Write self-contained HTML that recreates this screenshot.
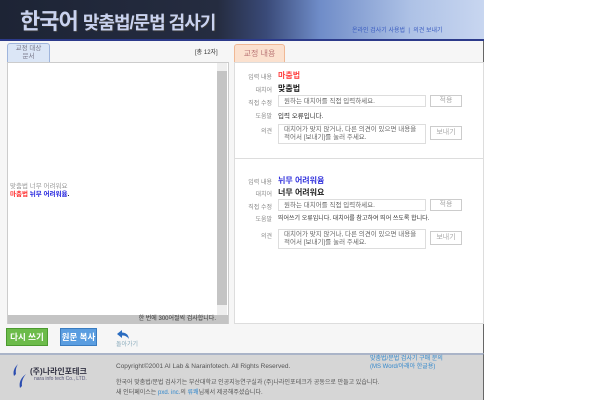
<!DOCTYPE html><html><head><meta charset="utf-8"><style>
*{margin:0;padding:0;box-sizing:border-box}
body{width:600px;height:400px;background:#fff;font-family:"Liberation Sans","Noto Sans CJK KR",sans-serif;position:relative;overflow:hidden}
.a{position:absolute}
.hd{left:0;top:0;width:484px;height:41px;background:linear-gradient(90deg,#1d2435 0%,#252c40 45%,#3a4a78 55%,#6f8cc8 66%,#aec2e6 85%,#c8d6f0 100%);border-bottom:2px solid #2c3a8a}
.body{left:0;top:41px;width:484px;height:312px;background:#f6f6f6;border-right:1px solid #666}
.ft{left:0;top:353px;width:484px;height:47px;background:#d6d6d6;border-top:2px solid #aab4c8;border-right:1px solid #666}
.lbl{font-size:6px;color:#888;text-align:right;width:40px;left:232px}
.in{background:#fff;border:1px solid #ddd;font-size:6.5px;color:#666;padding:1px 5px;line-height:9px}
.bt{background:#fff;border:1px solid #ccc;font-size:7px;color:#aaa;text-align:center;line-height:10px}
</style></head><body>
<div class="a hd"></div>
<div class="a" style="left:20px;top:4px;font-size:22px;font-weight:bold;color:#c9d2ef;letter-spacing:-1px;text-shadow:1px 1px 0 #333;white-space:nowrap">한국어 <span style="font-size:18px">맞춤법/문법 검사기</span></div>
<div class="a" style="left:352px;top:25px;font-size:6px;color:#3a5cc0">온라인 검사기 사용법 &nbsp;|&nbsp; 의견 보내기</div>
<div class="a body"></div>
<div class="a" style="left:7px;top:43px;width:43px;height:20px;background:#dbe6f6;border:1px solid #9fb5dc;border-radius:3px 3px 0 0;font-size:6.5px;color:#778;text-align:center;line-height:8px;padding-top:1px">교정 대상<br>문서</div>
<div class="a" style="left:195px;top:47px;font-size:6px;color:#333">[총 12자]</div>
<div class="a" style="left:7px;top:62px;width:222px;height:262px;background:#fff;border:1px solid #ccc"></div>
<div class="a" style="left:217px;top:63px;width:10px;height:252px;background:#c4c4c4"></div>
<div class="a" style="left:217px;top:63px;width:10px;height:8px;background:#eee"></div>
<div class="a" style="left:217px;top:305px;width:10px;height:10px;background:#eee"></div>
<div class="a" style="left:8px;top:315px;width:220px;height:9px;background:#c4c4c4;font-size:6px;color:#333;text-align:right;padding-right:12px;line-height:9px">한 번에 300어절씩 검사합니다.</div>
<div class="a" style="left:10px;top:180px;font-size:6.5px;color:#999">맞춤법 너무 어려워요</div>
<div class="a" style="left:10px;top:188px;font-size:6.5px;font-weight:bold"><span style="color:#f33">마춤법</span> <span style="color:#22d">뉘무 어려워윰</span>.</div>
<div class="a" style="left:234px;top:44px;width:51px;height:19px;background:#fbe1cf;border:1px solid #f0b894;border-radius:3px 3px 0 0;font-size:8px;color:#b77;text-align:center;line-height:17px">교정 내용</div>
<div class="a" style="left:234px;top:62px;width:250px;height:262px;background:#fff;border:1px solid #ddd"></div>
<div class="a" style="left:235px;top:158px;width:248px;height:1px;background:#ddd"></div>
<div class="a lbl" style="top:72px">입력 내용</div><div class="a" style="left:278px;top:70px;font-size:8px;color:#f44;font-weight:bold">마춤법</div>
<div class="a lbl" style="top:85px">대치어</div><div class="a" style="left:278px;top:83px;font-size:8px;color:#222;font-weight:bold">맞춤법</div>
<div class="a lbl" style="top:98px">직접 수정</div><div class="a in" style="left:278px;top:95px;width:148px;height:12px">원하는 대치어를 직접 입력하세요.</div><div class="a bt" style="left:430px;top:95px;width:32px;height:12px">적용</div>
<div class="a lbl" style="top:111px">도움말</div><div class="a" style="left:278px;top:110px;font-size:6.5px;color:#333">입력 오류입니다.</div>
<div class="a lbl" style="top:126px">의견</div><div class="a in" style="left:278px;top:124px;width:148px;height:20px;line-height:8px">대치어가 맞지 않거나, 다른 의견이 있으면 내용을 적어서 [보내기]를 눌러 주세요.</div><div class="a bt" style="left:430px;top:126px;width:32px;height:14px;line-height:12px">보내기</div>
<div class="a lbl" style="top:177px">입력 내용</div><div class="a" style="left:278px;top:175px;font-size:8px;color:#33d;font-weight:bold">뉘무 어려워윰</div>
<div class="a lbl" style="top:189px">대치어</div><div class="a" style="left:278px;top:187px;font-size:8px;color:#222;font-weight:bold">너무 어려워요</div>
<div class="a lbl" style="top:202px">직접 수정</div><div class="a in" style="left:278px;top:199px;width:148px;height:12px">원하는 대치어를 직접 입력하세요.</div><div class="a bt" style="left:430px;top:199px;width:32px;height:12px">적용</div>
<div class="a lbl" style="top:214px">도움말</div><div class="a" style="left:278px;top:213px;font-size:6px;color:#333">띄어쓰기 오류입니다. 대치어를 참고하여 띄어 쓰도록 합니다.</div>
<div class="a lbl" style="top:231px">의견</div><div class="a in" style="left:278px;top:229px;width:148px;height:20px;line-height:8px">대치어가 맞지 않거나, 다른 의견이 있으면 내용을 적어서 [보내기]를 눌러 주세요.</div><div class="a bt" style="left:430px;top:231px;width:32px;height:14px;line-height:12px">보내기</div>
<div class="a" style="left:6px;top:328px;width:42px;height:18px;background:#6cbb4a;border:1px solid #4c9a30;color:#fff;font-size:8.5px;font-weight:bold;text-align:center;line-height:16px">다시 쓰기</div>
<div class="a" style="left:60px;top:328px;width:37px;height:18px;background:#5a9de0;border:1px solid #3a7cc0;color:#fff;font-size:8.5px;font-weight:bold;text-align:center;line-height:16px">원문 복사</div>
<svg class="a" style="left:114px;top:329px" width="16" height="12"><path d="M3 5 L8 1 L8 3.5 Q14 3.5 15 10 Q12 6 8 6.5 L8 9 Z" fill="#2a6cc0"/></svg>
<div class="a" style="left:116px;top:339px;font-size:6px;color:#8ab">돌아가기</div>
<div class="a ft"></div>
<svg class="a" style="left:10px;top:362px" width="22" height="28"><path d="M8 2 Q2 8 4 14 L6 12 Q5 7 8 2Z M16 12 Q8 18 10 26 L12 24 Q11 18 16 12Z" fill="#2a4cb0"/></svg>
<div class="a" style="left:30px;top:366px;font-size:8px;color:#334;font-weight:bold">(주)나라인포테크</div>
<div class="a" style="left:34px;top:376px;font-size:5px;color:#557">nara info tech Co., LTD.</div>
<div class="a" style="left:116px;top:363px;font-size:6.5px;color:#555">Copyright©2001 AI Lab &amp; Narainfotech. All Rights Reserved.</div>
<div class="a" style="left:116px;top:377px;font-size:6px;color:#555">한국어 맞춤법/문법 검사기는 부산대학교 인공지능연구실과 (주)나라인포테크가 공동으로 만들고 있습니다.</div>
<div class="a" style="left:116px;top:387px;font-size:6px;color:#555">새 인터페이스는 <span style="color:#38c">pxd. inc.</span>의 <span style="color:#38c">류쾌</span>님께서 제공해주셨습니다.</div>
<div class="a" style="left:370px;top:355px;font-size:6px;color:#38c;line-height:8px">맞춤법/문법 검사기 구매 문의<br>(MS Word/아래아 한글용)</div>
</body></html>
